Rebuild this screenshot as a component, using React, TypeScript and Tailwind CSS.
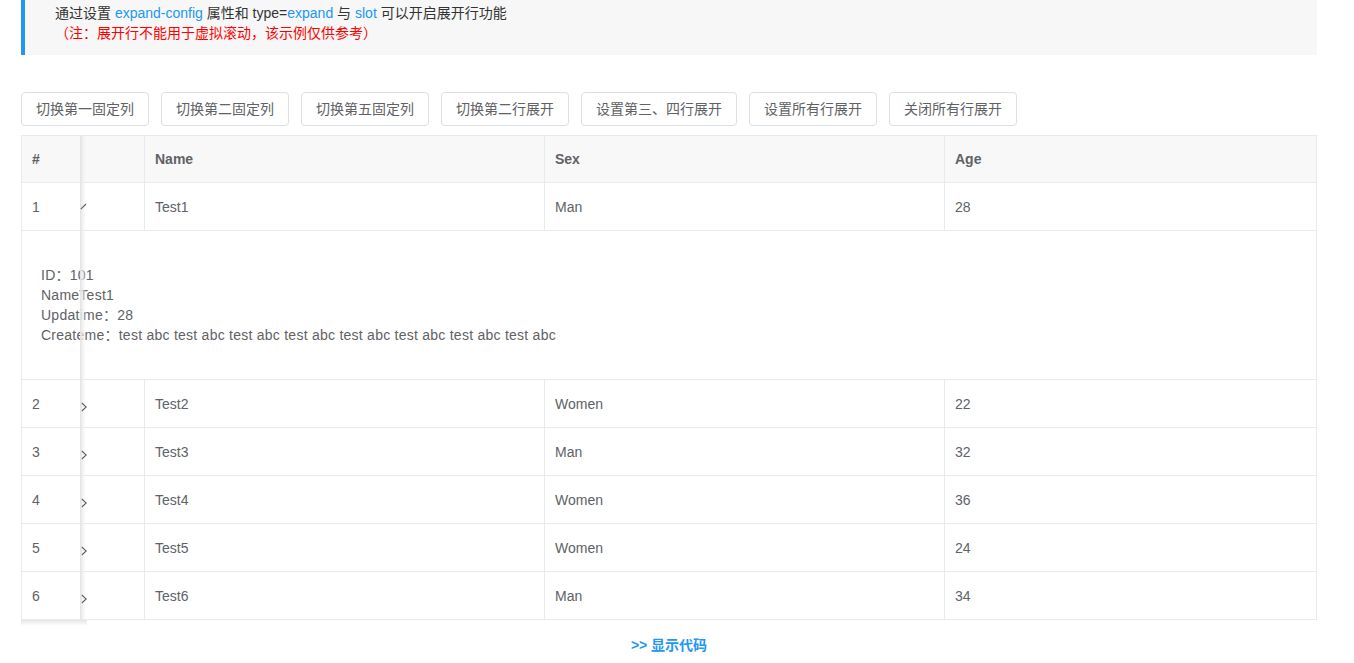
import { Fragment } from "react";

interface Row {
  id: number;
  name: string;
  sex: string;
  age: number;
}

const rows: Row[] = [
  { id: 1, name: "Test1", sex: "Man", age: 28 },
  { id: 2, name: "Test2", sex: "Women", age: 22 },
  { id: 3, name: "Test3", sex: "Man", age: 32 },
  { id: 4, name: "Test4", sex: "Women", age: 36 },
  { id: 5, name: "Test5", sex: "Women", age: 24 },
  { id: 6, name: "Test6", sex: "Man", age: 34 },
];

const buttons = ["切换第一固定列", "切换第二固定列", "切换第五固定列", "切换第二行展开", "设置第三、四行展开", "设置所有行展开", "关闭所有行展开"];

const Chevron = ({ open }: { open: boolean }) =>
  open ? (
    <svg width="7" height="7" viewBox="0 0 7 7" className="relative z-30 -ml-px mt-[-2px]">
      <path d="M0.8 6.2 L6 1" fill="none" stroke="#606266" strokeWidth="1.1" />
    </svg>
  ) : (
    <svg width="7" height="10" viewBox="0 0 7 10" className="relative z-30 mt-[4px]">
      <path d="M0.8 1 L5.2 5 L0.8 9" fill="none" stroke="#606266" strokeWidth="1.1" />
    </svg>
  );

const cell = "flex items-center h-12 pt-[2px] border-b border-[#e8eaec]";
const head = "flex items-center h-[47px] border-b border-[#e8eaec] bg-[#f8f8f9] font-bold";

export default function App() {
  return (
    <div className="min-h-screen bg-white font-['Liberation_Sans','Noto_Sans_CJK_SC',sans-serif] text-[14px] text-[#606266]">
      <div className="pl-[21px] w-[1317px]">
        {/* tip */}
        <div className="bg-[#f7f7f7] border-l-4 border-[#2196f3] pl-[30px] pt-[3px] pb-[12px] leading-[20px]">
          <p className="text-[#333]">
            通过设置 <span className="text-[#2196f3]">expand-config</span> 属性和 type=<span className="text-[#2196f3]">expand</span> 与 <span className="text-[#2196f3]">slot</span> 可以开启展开行功能
          </p>
          <p className="text-[#f00]">（注：展开行不能用于虚拟滚动，该示例仅供参考）</p>
        </div>

        {/* toolbar */}
        <div className="flex gap-[12px] mt-[37px]">
          {buttons.map(b => (
            <button key={b} className="h-[34px] px-[14px] bg-white border border-[#dcdfe6] rounded-[4px] text-[#606266] text-[14px]">
              {b}
            </button>
          ))}
        </div>

        {/* table */}
        <div className="relative mt-[9px] border-t border-x border-[#e8eaec]">
          <div className="grid grid-cols-[59px_64px_400px_400px_1fr]">
            <div className={`${head} relative z-10 pl-[10px]`}>#</div>
            <div className={`${head} border-r`} />
            <div className={`${head} border-r pl-[10px]`}>Name</div>
            <div className={`${head} border-r pl-[10px]`}>Sex</div>
            <div className={`${head} pl-[10px]`}>Age</div>

            {rows.map(r => (
              <Fragment key={r.id}>
                <div className={`${cell} relative z-10 bg-white pl-[10px]`}>{r.id}</div>
                <div className={`${cell} border-r`}>
                  <Chevron open={r.id === 1} />
                </div>
                <div className={`${cell} border-r pl-[10px]`}>{r.name}</div>
                <div className={`${cell} border-r pl-[10px]`}>{r.sex}</div>
                <div className={`${cell} pl-[10px]`}>{r.age}</div>
                {r.id === 1 && (
                  <div className="col-span-5 h-[149px] border-b border-[#e8eaec] pl-[19px] pt-[34px] leading-[20px] tracking-[0.25px]">
                    <ul>
                      <li>ID：101</li>
                      <li>NameTest1</li>
                      <li>Updatime：28</li>
                      <li>Createme：test abc test abc test abc test abc test abc test abc test abc test abc</li>
                    </ul>
                  </div>
                )}
              </Fragment>
            ))}
          </div>

          {/* fixed column shadow */}
          <div className="absolute top-0 bottom-0 left-[58px] w-[6px] z-20 pointer-events-none bg-linear-to-r from-[#e2e2e2] via-[#efefef]/70 to-transparent" />
          <div className="absolute top-full -left-px w-[66px] h-[6px] pointer-events-none bg-linear-to-b from-black/10 to-transparent" />
        </div>

        <div className="mt-[15px] text-center font-bold text-[#2196f3] leading-[20px]">&gt;&gt; 显示代码</div>
      </div>
    </div>
  );
}
